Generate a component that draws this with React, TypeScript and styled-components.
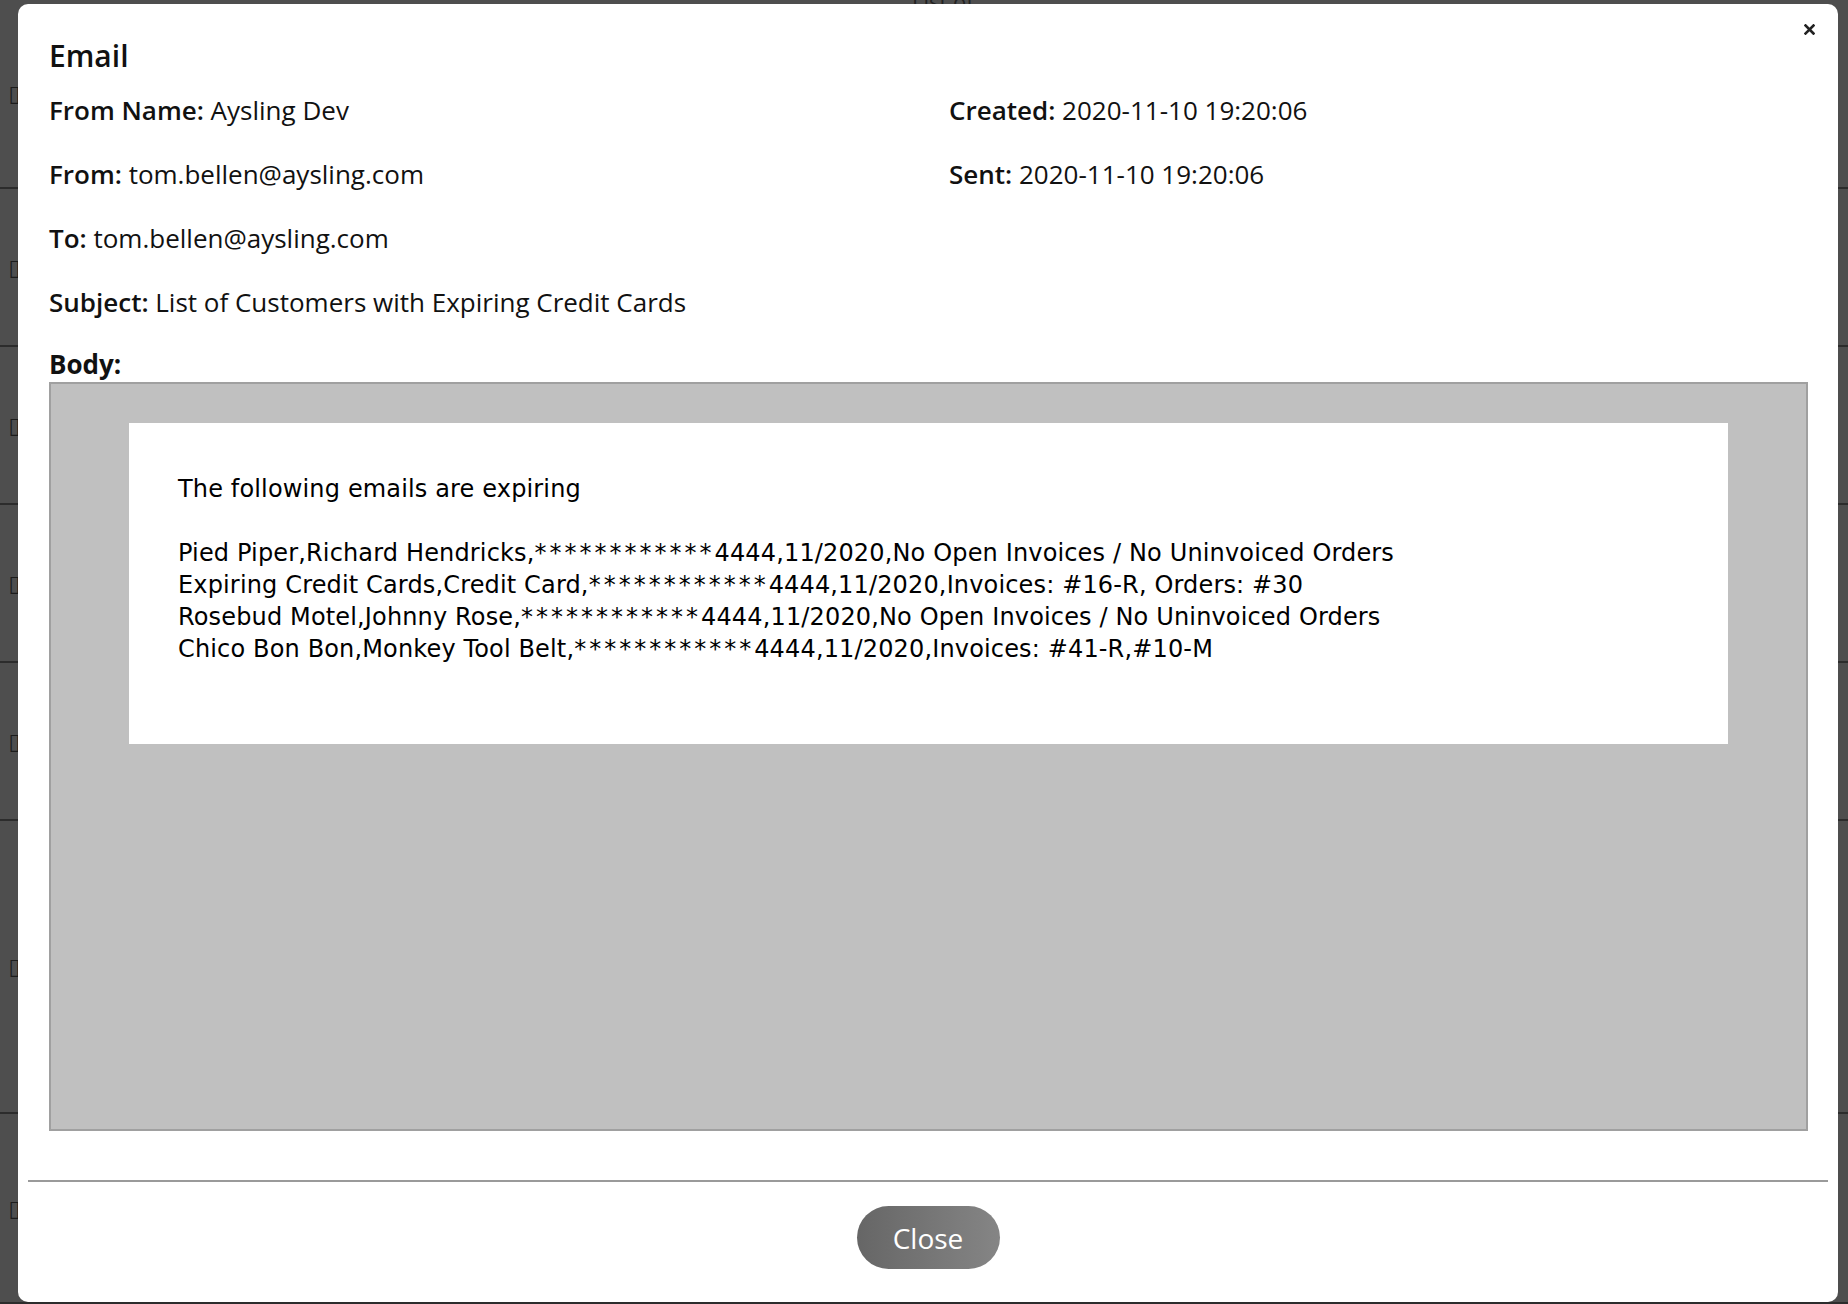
import React from "react";
import styled, { createGlobalStyle } from "styled-components";

const GlobalStyle = createGlobalStyle`
  html, body {
    margin: 0;
    padding: 0;
    background: #4e4e4e;
    overflow: hidden;
  }
  * { box-sizing: border-box; }
`;

const Page = styled.div`
  position: relative;
  width: 1848px;
  height: 1304px;
  overflow: hidden;
  background: #4e4e4e;
`;

const BackdropList = styled.div`
  display: flex;
  flex-direction: column;
`;

const BackdropRow = styled.div<{ $h: number }>`
  height: ${(p) => p.$h}px;
  border-bottom: 2px solid #2c2c2c;
  display: flex;
  align-items: center;
  font-family: "DejaVu Sans", sans-serif;
  font-size: 22px;
  color: #1c1c1c;
  text-indent: -6px;
`;

const BackdropTitle = styled.div`
  position: absolute;
  top: -14px;
  left: 912px;
  font-family: "Open Sans", sans-serif;
  font-size: 22px;
  color: #222;
`;

const Modal = styled.div`
  position: absolute;
  left: 18px;
  top: 4px;
  width: 1820px;
  height: 1298px;
  background: #fff;
  border-radius: 10px;
  display: flex;
  flex-direction: column;
  font-family: "Open Sans", sans-serif;
  color: #111;
`;

const CloseX = styled.button`
  position: absolute;
  top: 15px;
  right: 19px;
  width: 20px;
  height: 20px;
  padding: 0;
  border: none;
  background: transparent;
  display: flex;
  align-items: center;
  justify-content: center;
  cursor: pointer;
`;

const ModalBody = styled.div`
  padding: 31px 30px 0 31px;
  display: flex;
  flex-direction: column;
`;

const Title = styled.h4`
  margin: 0 0 15px;
  font-size: 30px;
  line-height: 42px;
  font-weight: 600;
  color: #111;
`;

const FieldsGrid = styled.div`
  display: grid;
  grid-template-columns: 900px 1fr;
`;

const Column = styled.div`
  display: flex;
  flex-direction: column;
`;

const Field = styled.div`
  font-size: 26px;
  line-height: 36px;
  margin-bottom: 28px;
  white-space: nowrap;
`;

const Label = styled.span`
  font-weight: 600;
`;

const BodyLabel = styled.div`
  font-size: 26px;
  line-height: 32px;
  font-weight: 700;
  margin-bottom: 2px;
`;

const BodyFrame = styled.div`
  height: 749px;
  border: 2px solid #a0a0a0;
  background: #c0c0c0;
  padding-top: 39px;
`;

const EmailCard = styled.div`
  width: 1599px;
  margin: 0 auto;
  background: #fff;
  padding: 50px 51px 79px 49px;
  font-family: "DejaVu Sans", Verdana, sans-serif;
  font-size: 24px;
  line-height: 32px;
  color: #000;
`;

const Line = styled.div`
  height: 32px;
  white-space: nowrap;
  letter-spacing: 0.15px;
`;

const Mask = styled.span`
  letter-spacing: 3px;
`;

const Separator = styled.hr`
  margin: 49px 10px 0;
  border: none;
  height: 2px;
  background: #9a9a9a;
`;

const Footer = styled.div`
  display: flex;
  justify-content: center;
  padding-top: 24px;
`;

const CloseButton = styled.button`
  width: 143px;
  height: 63px;
  border: none;
  border-radius: 32px;
  background: linear-gradient(to right, #666666, #858585);
  color: #fff;
  font-family: "Open Sans", sans-serif;
  font-size: 28px;
  cursor: pointer;
`;

const backdropRows = [189, 158, 158, 158, 158, 293, 190];

const lines = [
  "The following emails are expiring",
  "",
  "Pied Piper,Richard Hendricks,************4444,11/2020,No Open Invoices / No Uninvoiced Orders",
  "Expiring Credit Cards,Credit Card,************4444,11/2020,Invoices: #16-R, Orders: #30",
  "Rosebud Motel,Johnny Rose,************4444,11/2020,No Open Invoices / No Uninvoiced Orders",
  "Chico Bon Bon,Monkey Tool Belt,************4444,11/2020,Invoices: #41-R,#10-M",
];

function renderLine(text: string) {
  return text.split(/(\*+)/).map((part, i) =>
    part.startsWith("*") ? <Mask key={i}>{part}</Mask> : <React.Fragment key={i}>{part}</React.Fragment>
  );
}

export default function App() {
  return (
    <Page>
      <GlobalStyle />
      <BackdropTitle>List of</BackdropTitle>
      <BackdropList>
        {backdropRows.map((h, i) => (
          <BackdropRow key={i} $h={h}>
            ; &#9647;
          </BackdropRow>
        ))}
      </BackdropList>
      <Modal>
        <CloseX aria-label="Close">
          <svg width="11" height="11" viewBox="0 0 11 11">
            <path d="M1.5 1.5 L9.5 9.5 M9.5 1.5 L1.5 9.5" stroke="#222" strokeWidth="2.6" strokeLinecap="square" />
          </svg>
        </CloseX>
        <ModalBody>
          <Title>Email</Title>
          <FieldsGrid>
            <Column>
              <Field>
                <Label>From Name:</Label> Aysling Dev
              </Field>
              <Field>
                <Label>From:</Label> tom.bellen@aysling.com
              </Field>
              <Field>
                <Label>To:</Label> tom.bellen@aysling.com
              </Field>
              <Field>
                <Label>Subject:</Label> List of Customers with Expiring Credit Cards
              </Field>
            </Column>
            <Column>
              <Field>
                <Label>Created:</Label> 2020-11-10 19:20:06
              </Field>
              <Field>
                <Label>Sent:</Label> 2020-11-10 19:20:06
              </Field>
            </Column>
          </FieldsGrid>
          <BodyLabel>Body:</BodyLabel>
          <BodyFrame>
            <EmailCard>
              {lines.map((l, i) => (
                <Line key={i}>{renderLine(l)}</Line>
              ))}
            </EmailCard>
          </BodyFrame>
        </ModalBody>
        <Separator />
        <Footer>
          <CloseButton>Close</CloseButton>
        </Footer>
      </Modal>
    </Page>
  );
}
